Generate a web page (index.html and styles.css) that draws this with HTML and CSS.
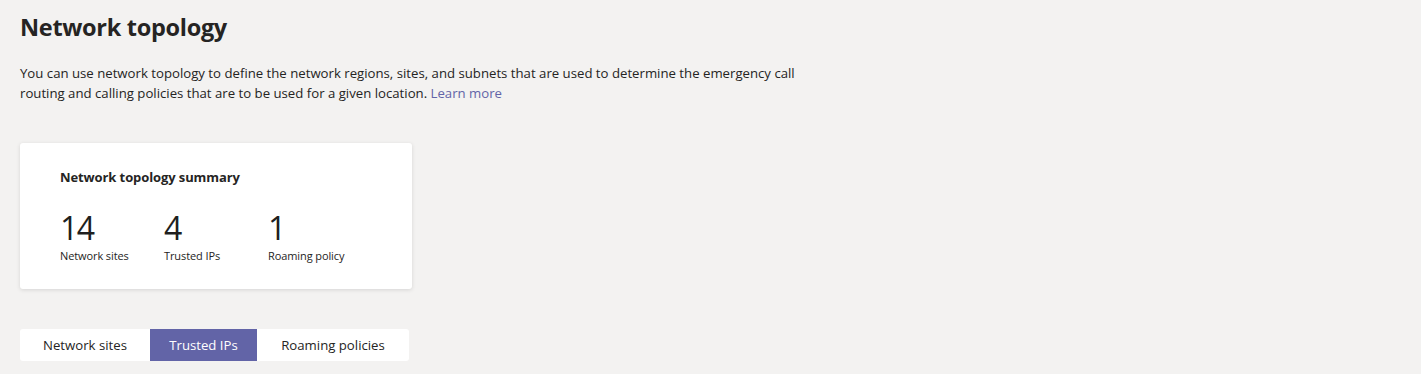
FILE: index.html
```html
<!DOCTYPE html>
<html>
<head>
<meta charset="utf-8">
<link rel="stylesheet" href="styles.css">
</head>
<body>
<div class="page">
  <h1 class="title">Network topology</h1>
  <p class="intro">You can use network topology to define the network regions, sites, and subnets that are used to determine the emergency call routing and calling policies that are to be used for a given location. <a class="link" href="#">Learn more</a></p>
  <div class="card">
    <div class="card-title">Network topology summary</div>
    <div class="stats">
      <div class="stat"><div class="num">14</div><div class="label">Network sites</div></div>
      <div class="stat"><div class="num">4</div><div class="label">Trusted IPs</div></div>
      <div class="stat"><div class="num">1</div><div class="label">Roaming policy</div></div>
    </div>
  </div>
  <div class="tabs">
    <div class="tab t1">Network sites</div>
    <div class="tab t2 active">Trusted IPs</div>
    <div class="tab t3">Roaming policies</div>
  </div>
</div>
</body>
</html>
```
FILE: styles.css
```css
* { box-sizing: border-box; }
html, body { margin: 0; padding: 0; }
body {
  background: #f3f2f1;
  color: #252423;
  font-family: "Open Sans", "Noto Sans", sans-serif;
}
.page { padding: 11px 20px 0 20px; }
.title {
  margin: 0;
  font-size: 23.5px;
  font-weight: 700;
  line-height: 32px;
  letter-spacing: -0.3px;
}
.intro {
  margin: 20px 0 0 0;
  width: 800px;
  font-size: 13.2px;
  line-height: 20px;
}
.link { color: #6264a7; text-decoration: none; }
.card {
  margin-top: 40px;
  width: 392px;
  height: 146px;
  background: #fff;
  border-radius: 3px;
  box-shadow: 0 1px 4px rgba(0,0,0,0.12);
  padding: 25px 40px 0 40px;
}
.card-title {
  font-size: 13px;
  font-weight: 700;
  line-height: 18px;
  letter-spacing: -0.1px;
}
.stats { display: flex; margin-top: 22px; }
.stat { width: 104px; }
.num {
  font-size: 32px;
  line-height: 40px;
  font-weight: 400;
  letter-spacing: -1.5px;
  color: #201f1e;
}
.label {
  font-size: 11px;
  line-height: 16px;
  letter-spacing: -0.1px;
}
.tabs {
  margin-top: 40px;
  display: flex;
  width: 389px;
  height: 32px;
  background: #fff;
  border-radius: 3px;
}
.tab {
  position: relative;
  display: flex;
  align-items: center;
  justify-content: center;
  font-size: 13.2px;
  height: 32px;
}
.t1 { width: 130px; }
.t2 { width: 107px; }
.t3 { width: 152px; }
.tab.active { background: #6264a7; color: #fff; }
.tab.active::after {
  content: "";
  position: absolute;
  left: 50%;
  bottom: -5px;
  margin-left: -5px;
  border-left: 5px solid transparent;
  border-right: 5px solid transparent;
  border-top: 5px solid #6264a7;
}
```
